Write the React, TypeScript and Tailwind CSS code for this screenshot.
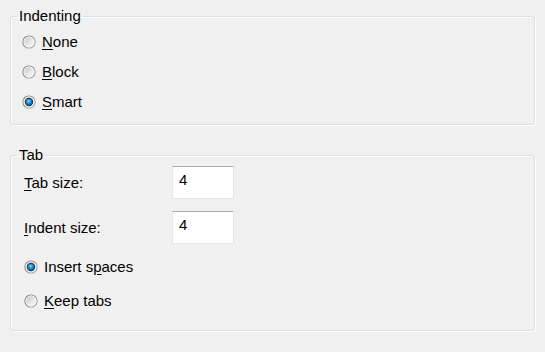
import React, { useState } from 'react';

function RadioDot({ checked }: { checked: boolean }) {
  return (
    <svg width="14" height="14" viewBox="0 0 14 14" className="shrink-0">
      <defs>
        <linearGradient id="ring" x1="0" y1="0" x2="1" y2="1">
          <stop offset="0" stopColor="#6f6f6f" />
          <stop offset="1" stopColor="#a5a5a5" />
        </linearGradient>
        <linearGradient id="well" x1="0" y1="0" x2="1" y2="1">
          <stop offset="0" stopColor="#c4c4c4" />
          <stop offset="0.55" stopColor="#e6e6e6" />
          <stop offset="1" stopColor="#fbfbfb" />
        </linearGradient>
        <radialGradient id="dot" cx="0.45" cy="0.4" r="0.65">
          <stop offset="0" stopColor="#9ee0fb" />
          <stop offset="0.4" stopColor="#2a92d2" />
          <stop offset="1" stopColor="#0f4a75" />
        </radialGradient>
      </defs>
      <circle cx="7" cy="7" r="6.6" fill="url(#ring)" />
      <circle cx="7" cy="7" r="5.7" fill="#fbfbfb" />
      <circle cx="7" cy="7" r="4.7" fill="url(#well)" />
      {checked && (
        <>
          <circle cx="7" cy="7" r="4.2" fill="#0a2c46" />
          <circle cx="7" cy="7" r="3.5" fill="url(#dot)" />
        </>
      )}
    </svg>
  );
}

function Radio({
  checked,
  onClick,
  children,
}: {
  checked: boolean;
  onClick: () => void;
  children: React.ReactNode;
}) {
  return (
    <div onClick={onClick} className="flex items-center gap-[6px] cursor-default select-none">
      <RadioDot checked={checked} />
      <span>{children}</span>
    </div>
  );
}

function Key({ children }: { children: React.ReactNode }) {
  return <span className="underline decoration-1 underline-offset-[2px]">{children}</span>;
}

function GroupBox({ title, children, className }: { title: string; children: React.ReactNode; className?: string }) {
  return (
    <fieldset
      className={
        'border border-[#d5dfe5] rounded-[3px] pl-[6px] shadow-[inset_1px_1px_0_#ffffff,1px_1px_0_#ffffff] ' +
        (className || '')
      }
    >
      <legend className="px-[2px] leading-[18px]">{title}</legend>
      {children}
    </fieldset>
  );
}

export default function App() {
  const [indent, setIndent] = useState<'none' | 'block' | 'smart'>('smart');
  const [spaces, setSpaces] = useState(true);
  const [tabSize, setTabSize] = useState('4');
  const [indentSize, setIndentSize] = useState('4');

  // edit text sits near the top of the box, not centred
  const inputCls =
    'w-[62px] h-[33px] bg-white border border-[#e2e7ec] border-t-[#abadb3] px-[6px] pt-[3px] pb-[10px] leading-[18px] text-[15px] text-black outline-none self-start';

  return (
    <div
      className="w-[545px] h-[352px] bg-[#f0f0f0] px-[10px] pt-[7px] text-[15px] text-black leading-[18px]"
      style={{ fontFamily: '"Liberation Sans", Arial, sans-serif' }}
    >
      <GroupBox title="Indenting" className="pb-[7px]">
        <div className="ml-[5px] pt-[2px] flex flex-col">
          <div className="h-[30px] flex items-center">
            <Radio checked={indent === 'none'} onClick={() => setIndent('none')}>
              <Key>N</Key>one
            </Radio>
          </div>
          <div className="h-[30px] flex items-center">
            <Radio checked={indent === 'block'} onClick={() => setIndent('block')}>
              <Key>B</Key>lock
            </Radio>
          </div>
          <div className="h-[30px] flex items-center">
            <Radio checked={indent === 'smart'} onClick={() => setIndent('smart')}>
              <Key>S</Key>mart
            </Radio>
          </div>
        </div>
      </GroupBox>

      <GroupBox title="Tab" className="mt-[21px] pb-[12px]">
        <div className="ml-[7px] pt-[2px] flex flex-col">
          <div className="flex items-center h-[33px]">
            <label className="w-[148px]">
              <Key>T</Key>ab size:
            </label>
            <input className={inputCls} value={tabSize} onChange={(e) => setTabSize(e.target.value)} />
          </div>
          <div className="flex items-center h-[33px] mt-[12px]">
            <label className="w-[148px]">
              <Key>I</Key>ndent size:
            </label>
            <input className={inputCls} value={indentSize} onChange={(e) => setIndentSize(e.target.value)} />
          </div>
          <div className="mt-[6px] h-[34px] flex items-center">
            <Radio checked={spaces} onClick={() => setSpaces(true)}>
              Insert s<Key>p</Key>aces
            </Radio>
          </div>
          <div className="h-[34px] flex items-center">
            <Radio checked={!spaces} onClick={() => setSpaces(false)}>
              <Key>K</Key>eep tabs
            </Radio>
          </div>
        </div>
      </GroupBox>
    </div>
  );
}
